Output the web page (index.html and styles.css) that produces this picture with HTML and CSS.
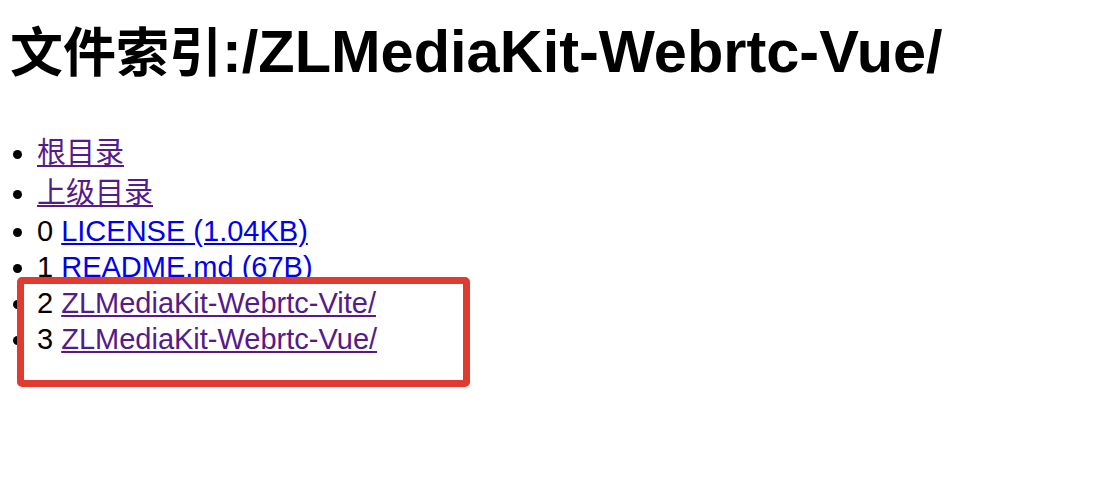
FILE: index.html
```html
<!DOCTYPE html>
<html lang="zh-CN">
<head>
<meta charset="utf-8">
<title>文件索引:/ZLMediaKit-Webrtc-Vue/</title>
<link rel="stylesheet" href="styles.css">
</head>
<body>
<h1 class="title"><span class="cjk">文件索引</span>:/ZLMediaKit-Webrtc-Vue/</h1>
<ul class="files">
  <li class="nav"><a class="visited" href="#">根目录</a></li>
  <li class="nav"><a class="visited" href="#">上级目录</a></li>
  <li>0 <a class="link" href="#">LICENSE (1.04KB)</a></li>
  <li>1 <a class="link" href="#">README.md (67B)</a></li>
  <li>2 <a class="visited" href="#">ZLMediaKit-Webrtc-Vite/</a></li>
  <li>3 <a class="visited" href="#">ZLMediaKit-Webrtc-Vue/</a></li>
</ul>
<div class="highlight"></div>
</body>
</html>
```
FILE: styles.css
```css
html, body {
  margin: 0;
  padding: 0;
  background: #fff;
}
body {
  position: relative;
  width: 1118px;
  height: 502px;
  overflow: hidden;
  font-family: "Liberation Sans", "Noto Sans CJK SC", sans-serif;
  color: #000;
}
.title {
  margin: 0;
  padding: 20px 0 0 10px;
  font-size: 59.5px;
  line-height: 64px;
  font-weight: bold;
  letter-spacing: 0;
}
.title .cjk {
  font-size: 53px;
}
.files {
  margin: 0;
  padding: 47px 0 0 37px;
  list-style: disc;
  font-size: 29px;
}
.files li {
  line-height: 36px;
}
.files li.nav {
  line-height: 40px;
}
.link {
  color: #0000ee;
}
.visited {
  color: #551a8b;
}
a {
  text-decoration: underline;
  text-underline-offset: 2px;
}
.highlight {
  position: absolute;
  left: 17px;
  top: 277px;
  width: 439px;
  height: 96px;
  border: 7px solid #e03a31;
  border-radius: 5px;
}
```
